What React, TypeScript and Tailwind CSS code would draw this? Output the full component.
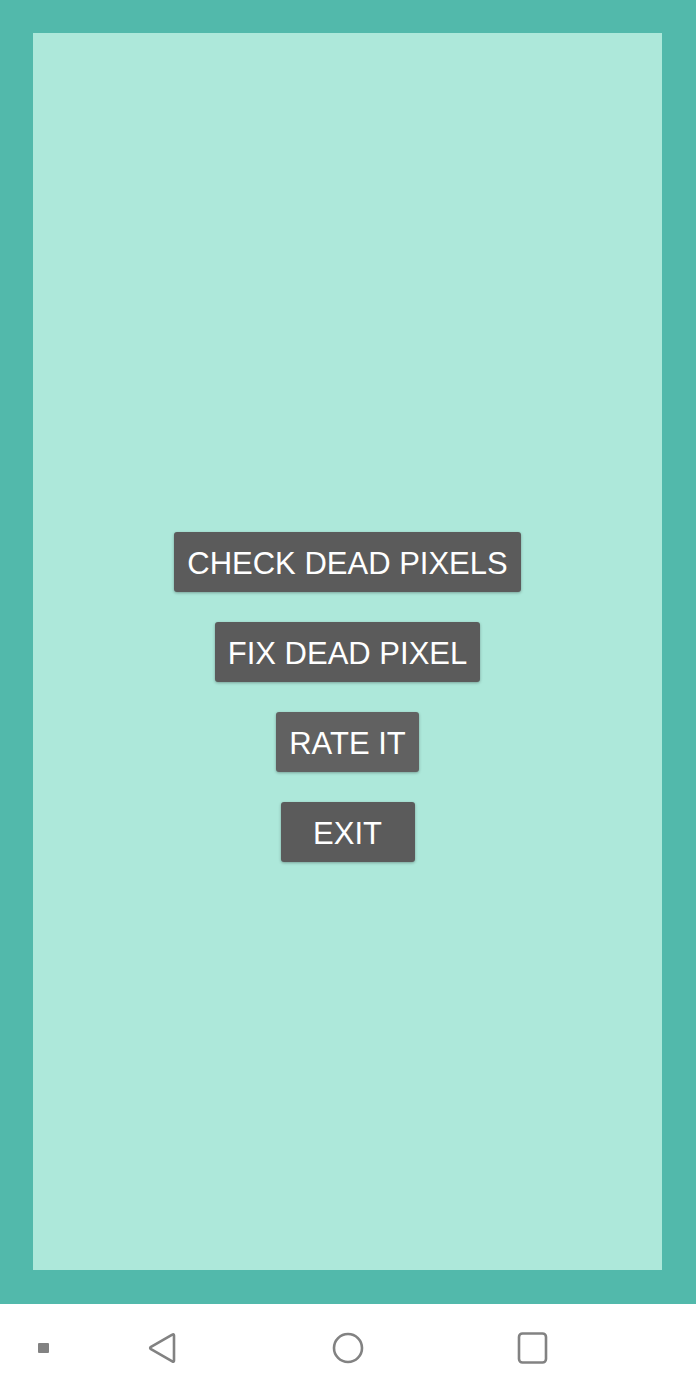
import React from 'react';

const buttons = [
  { label: 'CHECK DEAD PIXELS', bg: 'bg-[#5b5b5b]' },
  { label: 'FIX DEAD PIXEL', bg: 'bg-[#5b5b5b]' },
  { label: 'RATE IT', bg: 'bg-[#616161]' },
  { label: 'EXIT', bg: 'bg-[#5b5b5b]' },
];

function NavBar() {
  return (
    <div className="flex h-[88px] items-center bg-white">
      <div className="ml-[38px] h-[10px] w-[11px] rounded-[1px] bg-[#828282]" />
      <svg className="ml-[99px]" width="30" height="32" viewBox="0 0 30 32">
        <path
          d="M26 3.5 L26 28.5 Q26 30.5 24.3 29.4 L3 17.2 Q1.3 16 3 14.8 L24.3 2.6 Q26 1.5 26 3.5 Z"
          fill="none"
          stroke="#828282"
          strokeWidth="2.6"
          strokeLinejoin="round"
        />
      </svg>
      <svg className="ml-[154px]" width="32" height="32" viewBox="0 0 32 32">
        <circle cx="16" cy="16" r="14" fill="none" stroke="#828282" strokeWidth="2.6" />
      </svg>
      <svg className="ml-[153px]" width="32" height="32" viewBox="0 0 32 32">
        <rect x="2" y="1.5" width="27" height="29" rx="3.5" fill="none" stroke="#828282" strokeWidth="2.6" />
      </svg>
    </div>
  );
}

export default function App() {
  return (
    <div className="flex h-[1392px] w-[696px] flex-col overflow-hidden font-['Liberation_Sans',Arial,sans-serif]">
      <div className="h-[1304px] bg-[#52b9ab] p-[33px] pr-[34px] pb-[34px]">
        <div className="flex h-full flex-col items-center gap-[30px] bg-[#ade8da] pt-[499px]">
          {buttons.map((b) => (
            <button
              key={b.label}
              className={`flex h-[60px] min-w-[134px] items-center justify-center rounded-[3px] px-[13px] pt-[2px] text-[31px] leading-none text-white shadow-[0_1px_3px_rgba(0,0,0,0.3)] ${b.bg}`}
            >
              {b.label}
            </button>
          ))}
        </div>
      </div>
      <NavBar />
    </div>
  );
}
